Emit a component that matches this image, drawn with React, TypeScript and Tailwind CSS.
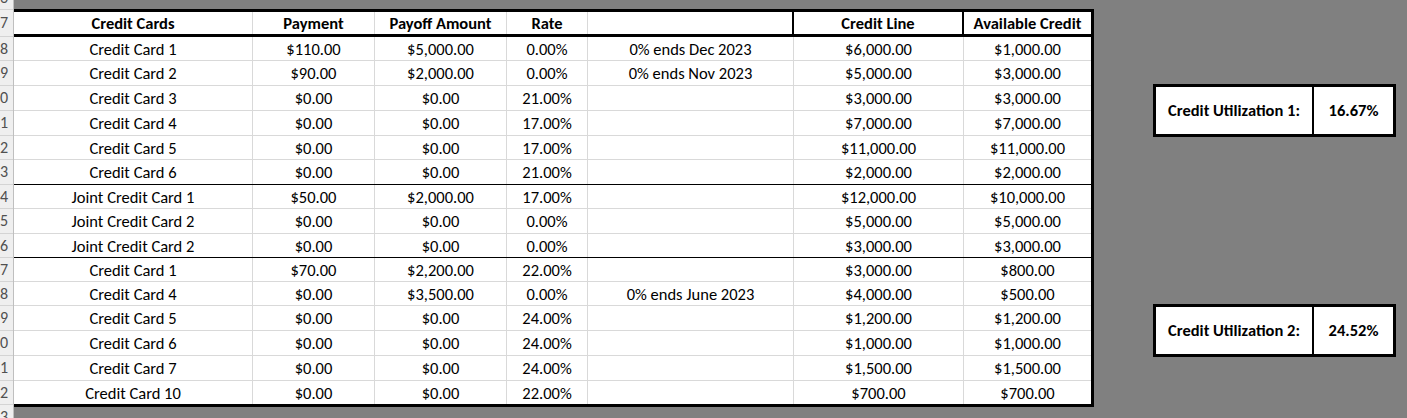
import React from "react";

type Row = [string, string, string, string, string, string, string];

const rows: Row[] = [
  ["Credit Card 1", "$110.00", "$5,000.00", "0.00%", "0% ends Dec 2023", "$6,000.00", "$1,000.00"],
  ["Credit Card 2", "$90.00", "$2,000.00", "0.00%", "0% ends Nov 2023", "$5,000.00", "$3,000.00"],
  ["Credit Card 3", "$0.00", "$0.00", "21.00%", "", "$3,000.00", "$3,000.00"],
  ["Credit Card 4", "$0.00", "$0.00", "17.00%", "", "$7,000.00", "$7,000.00"],
  ["Credit Card 5", "$0.00", "$0.00", "17.00%", "", "$11,000.00", "$11,000.00"],
  ["Credit Card 6", "$0.00", "$0.00", "21.00%", "", "$2,000.00", "$2,000.00"],
  ["Joint Credit Card 1", "$50.00", "$2,000.00", "17.00%", "", "$12,000.00", "$10,000.00"],
  ["Joint Credit Card 2", "$0.00", "$0.00", "0.00%", "", "$5,000.00", "$5,000.00"],
  ["Joint Credit Card 2", "$0.00", "$0.00", "0.00%", "", "$3,000.00", "$3,000.00"],
  ["Credit Card 1", "$70.00", "$2,200.00", "22.00%", "", "$3,000.00", "$800.00"],
  ["Credit Card 4", "$0.00", "$3,500.00", "0.00%", "0% ends June 2023", "$4,000.00", "$500.00"],
  ["Credit Card 5", "$0.00", "$0.00", "24.00%", "", "$1,200.00", "$1,200.00"],
  ["Credit Card 6", "$0.00", "$0.00", "24.00%", "", "$1,000.00", "$1,000.00"],
  ["Credit Card 7", "$0.00", "$0.00", "24.00%", "", "$1,500.00", "$1,500.00"],
  ["Credit Card 10", "$0.00", "$0.00", "22.00%", "", "$700.00", "$700.00"],
];

// pixel heights of each sheet row, gridline included
const heights = [24, 25, 25, 25, 24, 25, 24, 25, 24, 24, 24, 25, 25, 25, 26];

const widths = ["w-[239px]", "w-[122px]", "w-[132px]", "w-[81px]", "w-[206px]", "w-[170px]", "w-[127px]"];

function RowNumber({ n, h }: { n: number; h: number }) {
  return (
    <div
      className="flex shrink-0 items-center justify-end overflow-hidden border-b border-[#d4d4d4] pr-[5px] text-[16px] text-[#505050]"
      style={{ height: h }}
    >
      <span className="whitespace-nowrap">{n}</span>
    </div>
  );
}

function UtilBox({ label, value }: { label: string; value: string }) {
  return (
    <div className="flex h-[53px] w-[243px] border-[3px] border-black bg-white text-[16.5px] font-bold text-black">
      <div className="flex w-[158px] items-center justify-center whitespace-nowrap border-r-2 border-black">{label}</div>
      <div className="flex flex-1 items-center justify-center">{value}</div>
    </div>
  );
}

export default function App() {
  return (
    <div className="flex h-[418px] w-[1407px] overflow-hidden bg-[#808080] font-['Calibri','Lato',sans-serif] text-black">
      {/* row headers */}
      <div className="flex w-[14px] shrink-0 flex-col border-r border-[#bfbfbf] bg-[#efefef]">
        <div className="h-[10px] shrink-0 overflow-hidden border-b border-[#d4d4d4]">
          <div className="-mt-[14px] flex h-[24px] items-center justify-end pr-[5px] text-[16px] text-[#505050]">6</div>
        </div>
        <RowNumber n={7} h={27} />
        {heights.slice(0, 14).map((h, i) => (
          <RowNumber key={i} n={i + 8} h={h} />
        ))}
        <RowNumber n={22} h={24} />
        <div className="flex h-[24px] shrink-0 items-center justify-end overflow-hidden pr-[5px] text-[16px] text-[#505050]">
          23
        </div>
      </div>

      {/* table */}
      <div className="shrink-0 pt-[9px]">
        <div className="w-[1080px] border-r-[3px] border-black bg-white text-[16.5px]">
          <div className="flex h-[28px] border-y-[3px] border-black font-bold">
            <div className={`${widths[0]} flex items-center justify-center border-r border-[#d9d9d9]`}>Credit Cards</div>
            <div className={`${widths[1]} flex items-center justify-center border-r border-[#d9d9d9]`}>Payment</div>
            <div className={`${widths[2]} flex items-center justify-center border-r border-[#d9d9d9]`}>Payoff Amount</div>
            <div className={`${widths[3]} flex items-center justify-center border-r border-[#d9d9d9]`}>Rate</div>
            <div className={`${widths[4]} border-r-2 border-black`} />
            <div className={`${widths[5]} flex items-center justify-center border-r-2 border-black`}>Credit Line</div>
            <div className={`${widths[6]} flex items-center justify-center whitespace-nowrap`}>Available Credit</div>
          </div>
          {rows.map((r, i) => {
            const last = i === rows.length - 1;
            const section = i === 5 || i === 8;
            const bottom = last
              ? "border-b-[3px] border-black"
              : section
                ? "border-b border-black"
                : "border-b border-[#d9d9d9]";
            return (
              <div key={i} className={`flex ${bottom}`} style={{ height: heights[i] }}>
                {r.map((c, j) => (
                  <div
                    key={j}
                    className={`${widths[j]} flex items-center justify-center whitespace-nowrap pt-[1px] ${
                      j < 6 ? "border-r border-[#d9d9d9]" : ""
                    }`}
                  >
                    {c}
                  </div>
                ))}
              </div>
            );
          })}
        </div>
      </div>

      {/* utilization summary */}
      <div className="flex flex-col pl-[59px] pt-[84px]">
        <UtilBox label="Credit Utilization 1:" value="16.67%" />
        <div className="mt-[167px]">
          <UtilBox label="Credit Utilization 2:" value="24.52%" />
        </div>
      </div>
    </div>
  );
}
